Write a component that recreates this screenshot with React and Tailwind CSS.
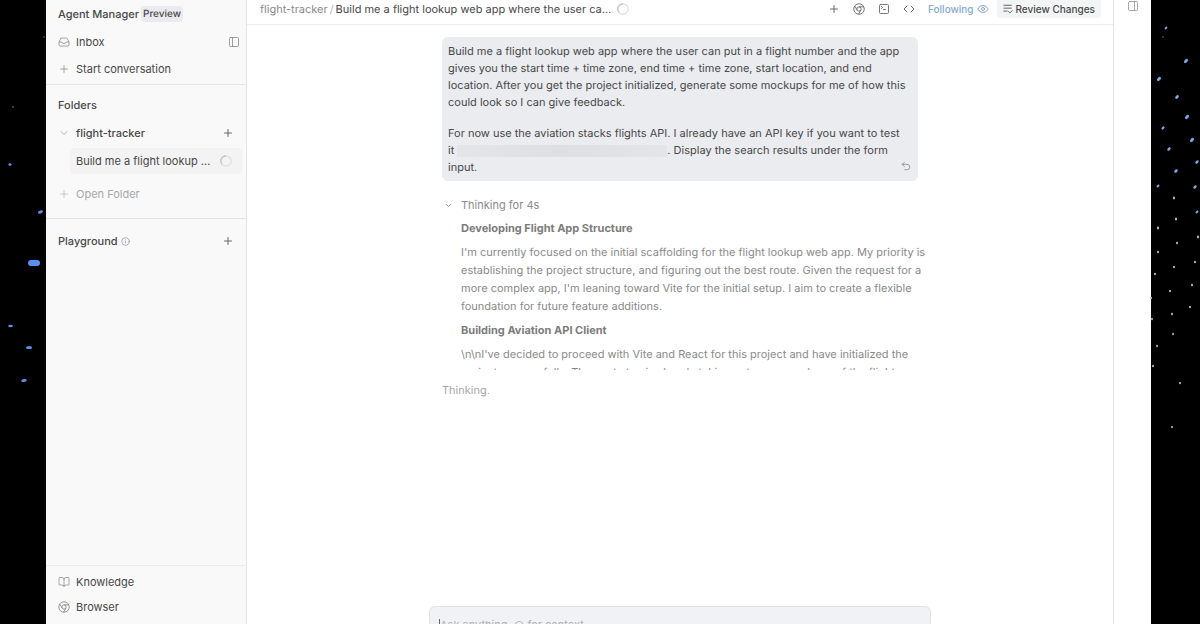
import React, { useState } from 'react'
import {
  BookOpen,
  ChevronDown,
  Code,
  Eye,
  Inbox,
  Info,
  PanelLeft,
  PanelRight,
  Plus,
  SquareTerminal
} from 'lucide-react'

// x, y, radius of every small star on the desktop behind the window
const stars = [
  [1166, 28, 1.6], [1186, 61, 2.4], [1159, 79, 2.4], [1177, 97, 2.2], [1187, 117, 2.4],
  [1163, 128, 1.9], [1192, 140, 2.4], [1169, 149, 2], [1197, 162, 2], [1176, 171, 2.1],
  [1158, 186, 1.7], [1195, 187, 2], [1197, 212, 1.7]
]

const dimStars = [
  [1163, 37, 0.8], [1174, 198, 1.8], [1176, 219, 1.8], [1158, 228, 1.8], [1198, 237, 1.8],
  [1177, 243, 1.7], [1158, 252, 1.7], [1195, 262, 1.7], [1174, 267, 1.7], [1155, 274, 1.7],
  [1192, 285, 1.7], [1170, 291, 1.7], [1151, 298, 1.7], [1190, 307, 1.7], [1172, 314, 1.7],
  [1152, 319, 1.5], [1173, 334, 1.5], [1157, 346, 1.5], [1153, 366, 1.6], [1180, 383, 1.6],
  [1172, 427, 1.5], [13, 107, 1], [44, 37, 0.8]
]

function Sky() {
  return (
    <svg className="pointer-events-none absolute top-0 left-0" width="1200" height="624" aria-hidden="true">
      {stars.map(([x, y, r]) => (
        <ellipse key={`${x}-${y}`} cx={x} cy={y} rx={r} ry={r * 0.65} fill="#7fa6e8" transform={`rotate(-45 ${x} ${y})`} />
      ))}
      {dimStars.map(([x, y, r]) => (
        <ellipse key={`${x}-${y}`} cx={x} cy={y} rx={r * 0.6} ry={r * 0.8} fill="#b4bac6" />
      ))}
      <rect x="28" y="260" width="12" height="6" rx="3" fill="#5590f2" />
      <ellipse cx="10" cy="164.500" rx="1.600" ry="1.200" fill="#5c8fe6" />
      <ellipse cx="40.500" cy="212" rx="2.600" ry="1.500" fill="#5c8fe6" transform="rotate(-20 40.500 212)" />
      <ellipse cx="10.500" cy="326" rx="2.300" ry="1.300" fill="#5c8fe6" />
      <ellipse cx="29" cy="347.500" rx="3" ry="1.600" fill="#5c8fe6" />
      <ellipse cx="24" cy="380.500" rx="2.800" ry="1.500" fill="#5c8fe6" transform="rotate(-10 24 380.500)" />
    </svg>
  )
}

function BrowserIcon({ className }) {
  return (
    <svg className={className} viewBox="0 0 24 24" fill="none" stroke="currentColor" strokeWidth="1.8" strokeLinejoin="round">
      <circle cx="12" cy="12" r="10.500" />
      <circle cx="12" cy="12" r="4.300" />
      <path d="M12 7.700h9.500M8.300 14.200 3.400 6M15.700 14.200l-4.600 8.200" />
    </svg>
  )
}

function ReviewIcon({ className }) {
  return (
    <svg className={className} viewBox="0 0 24 24" fill="none" stroke="currentColor" strokeWidth="2" strokeLinecap="round" strokeLinejoin="round">
      <path d="M2 3h18M2 10h18M2 17h8M13 18l3.500 3.500L22 16" />
    </svg>
  )
}

function UndoIcon({ className }) {
  return (
    <svg className={className} viewBox="0 0 24 24" fill="none" stroke="currentColor" strokeWidth="2" strokeLinecap="round" strokeLinejoin="round">
      <path d="M8 3 3 8l5 5M3 8h11.500a6.500 6.500 0 0 1 0 13H9" />
    </svg>
  )
}

function Spinner() {
  return (
    <svg className="size-3 shrink-0" viewBox="0 0 12 12" fill="none" strokeWidth="1.2" aria-hidden="true">
      <circle cx="6" cy="6" r="5.200" stroke="#dedede" />
      <path d="M6 .8A5.200 5.200 0 0 0 2 9.300" stroke="#c4c4c4" />
    </svg>
  )
}

function Sidebar() {
  return (
    <aside className="flex w-[201px] shrink-0 flex-col border-r border-[#e6e6e6] bg-[#f9f9f9] text-[#484848]">
      <div className="border-b border-[#e6e6e6] px-3 pt-1.5 pb-[7px]">
        <div className="flex h-4 items-center gap-0.5">
          <h1 className="font-medium">Agent Manager</h1>
          <span className="rounded-sm bg-[#ebebef] px-0.5 text-[10px] leading-4 font-medium">Preview</span>
        </div>
        <div className="mt-3 flex h-4 items-center justify-between">
          <button type="button" className="flex items-center gap-1.5">
            <Inbox className="size-3 text-[#8c8c8c]" strokeWidth={1.5} />
            Inbox
          </button>
          <button type="button" aria-label="Collapse sidebar" className="-mr-1.5">
            <PanelLeft className="size-3 text-[#808080]" strokeWidth={1.5} />
          </button>
        </div>
        <button type="button" className="mt-[11px] flex h-4 items-center gap-1.5">
          <Plus className="size-3 text-[#8c8c8c]" strokeWidth={1.5} />
          Start conversation
        </button>
      </div>

      <div className="border-b border-[#e2e2e2] px-3 pt-3 pb-4">
        <h2 className="font-medium">Folders</h2>
        <div className="mt-3 flex h-4 items-center justify-between">
          <button type="button" className="flex items-center gap-1.5 font-medium">
            <ChevronDown className="size-3 text-[#999999]" strokeWidth={1.5} />
            flight-tracker
          </button>
          <button type="button" aria-label="New conversation in folder">
            <Plus className="size-3 text-[#666666]" strokeWidth={2} />
          </button>
        </div>
        <button type="button" className="mt-[7px] ml-3 flex h-[26px] w-[172px] items-center justify-between rounded-sm bg-[#f3f3f3] pr-2.5 pl-1.5">
          <span>Build me a flight lookup ...</span>
          <Spinner />
        </button>
        <button type="button" className="mt-3 flex h-4 items-center gap-1.5 text-[#a8a8a8]">
          <Plus className="size-3 text-[#bbbbbb]" strokeWidth={1.5} />
          Open Folder
        </button>
      </div>

      <div className="flex items-center justify-between px-3 pt-3.5">
        <h2 className="flex items-center gap-[3px] font-medium">
          Playground
          <Info className="size-[9px] text-[#8c8c8c]" strokeWidth={1.8} />
        </h2>
        <button type="button" aria-label="New playground">
          <Plus className="size-3 text-[#666666]" strokeWidth={2} />
        </button>
      </div>

      <div className="mt-auto flex flex-col gap-[9px] border-t border-[#ececec] px-3 pt-2 pb-[9px]">
        <button type="button" className="flex items-center gap-1.5">
          <BookOpen className="size-3 text-[#8c8c8c]" strokeWidth={1.5} />
          Knowledge
        </button>
        <button type="button" className="flex items-center gap-1.5">
          <BrowserIcon className="size-3 text-[#8c8c8c]" />
          Browser
        </button>
      </div>
    </aside>
  )
}

function Header() {
  return (
    <header className="flex h-[25px] shrink-0 items-start justify-between border-b border-[#eeeeee] pr-3 pl-[13px]">
      <div className="flex h-[17px] items-center gap-0.5 whitespace-nowrap">
        <a href="#flight-tracker" className="text-[#8a8a8a]">flight-tracker</a>
        <span className="text-[#b5b5b5]">/</span>
        <span className="mr-1 text-[#484848]">Build me a flight lookup web app where the user ca...</span>
        <Spinner />
      </div>
      <div className="flex items-start text-[#686868]">
        <div className="flex h-[17px] items-center gap-[13px]">
          <button type="button" aria-label="New"><Plus className="size-3" strokeWidth={2} /></button>
          <button type="button" aria-label="Browser"><BrowserIcon className="size-3" /></button>
          <button type="button" aria-label="Terminal"><SquareTerminal className="size-3" strokeWidth={1.8} /></button>
          <button type="button" aria-label="Editor"><Code className="size-3" strokeWidth={2} /></button>
          <button type="button" className="flex items-center gap-[3px] text-[10px] font-medium text-[#87aad0]">
            Following
            <Eye className="size-3" strokeWidth={2} />
          </button>
        </div>
        <button type="button" className="ml-2 flex h-[18px] items-center gap-[3px] rounded-b-sm bg-[#f3f4f6] px-1.5 text-[10px] font-medium text-[#484848]">
          <ReviewIcon className="size-2.5" />
          Review Changes
        </button>
      </div>
    </header>
  )
}

function UserMessage() {
  return (
    <div className="relative rounded-md bg-[#ebecf0] px-1.5 pt-1.5 pb-[5px] leading-[17px] text-[#484848]">
      <p>
        Build me a flight lookup web app where the user can put in a flight number and the app
        <br />
        gives you the start time + time zone, end time + time zone, start location, and end
        <br />
        location. After you get the project initialized, generate some mockups for me of how this
        <br />
        could look so I can give feedback.
      </p>
      <p className="mt-3.5">
        For now use the aviation stacks flights API. I already have an API key if you want to test
        <br />
        it <span className="inline-block h-3 w-[210px] bg-linear-to-r from-[#e4e5e6] via-[#dedfe0] to-[#e4e5e8] align-middle" />. Display the search results under the form
        <br />
        input.
      </p>
      <button type="button" aria-label="Undo" className="absolute right-[7px] bottom-2.5 text-[#8c8c8c]">
        <UndoIcon className="size-2.5" />
      </button>
    </div>
  )
}

function Thoughts() {
  const [open, setOpen] = useState(true)

  return (
    <section className="-mr-3 mt-4 text-[#8a8a8a]">
      <button type="button" onClick={() => setOpen(!open)} className="flex items-center gap-2 pl-0.5">
        <ChevronDown className="size-[9px]" strokeWidth={2.5} />
        Thinking for 4s
      </button>
      {open && (
        <div className="mt-1.5 h-[151px] overflow-hidden pl-[19px] leading-[18px]">
          <h3 className="font-bold text-[#7c7c7c]">Developing Flight App Structure</h3>
          <p className="mt-1.5">
            I'm currently focused on the initial scaffolding for the flight lookup web app. My priority is
            <br />
            establishing the project structure, and figuring out the best route. Given the request for a
            <br />
            more complex app, I'm leaning toward Vite for the initial setup. I aim to create a flexible
            <br />
            foundation for future feature additions.
          </p>
          <h3 className="mt-1.5 font-bold text-[#7c7c7c]">Building Aviation API Client</h3>
          <p className="mt-1.5">
            {"\\n\\nI've decided to proceed with Vite and React for this project and have initialized the"}
            <br />
            project successfully. The next step is already taking out some mockups of the flight
          </p>
        </div>
      )}
    </section>
  )
}

export default function App() {
  const [prompt, setPrompt] = useState('')

  return (
    <div className="relative h-screen overflow-hidden bg-black pr-[49px] pl-[46px] font-['Inter',sans-serif] text-[11px] leading-4 [text-rendering:geometricPrecision]">
      <Sky />
      <div className="flex h-full bg-white">
        <Sidebar />
        <main className="flex min-w-0 flex-1 flex-col">
          <Header />
          <div className="min-h-0 flex-1 overflow-hidden pt-3">
            <div className="mx-auto w-full max-w-[476px]">
              <UserMessage />
              <Thoughts />
              <p className="mt-3 text-[#a8a8a8]">Thinking.</p>
            </div>
          </div>
          <div className="mx-auto h-[18px] w-full max-w-[502px] shrink-0">
            <div className="relative rounded-t-md border border-[#e2e3e5] bg-[#f1f2f5] px-2.5 pt-2.5">
              <span className="absolute top-3 left-[9px] h-3 w-px bg-[#666666]" />
              <textarea
                aria-label="Message"
                rows={3}
                value={prompt}
                onChange={(e) => setPrompt(e.target.value)}
                placeholder="Ask anything, @ for context"
                className="block w-full resize-none bg-transparent text-[#484848] outline-none placeholder:text-[#b0b2b6]"
              />
            </div>
          </div>
        </main>
        <aside className="flex w-[38px] shrink-0 items-start justify-center border-l border-[#e6e6e6]">
          <button type="button" aria-label="Toggle side panel">
            <PanelRight className="size-3 text-[#8c8c8c]" strokeWidth={1.5} />
          </button>
        </aside>
      </div>
    </div>
  )
}
